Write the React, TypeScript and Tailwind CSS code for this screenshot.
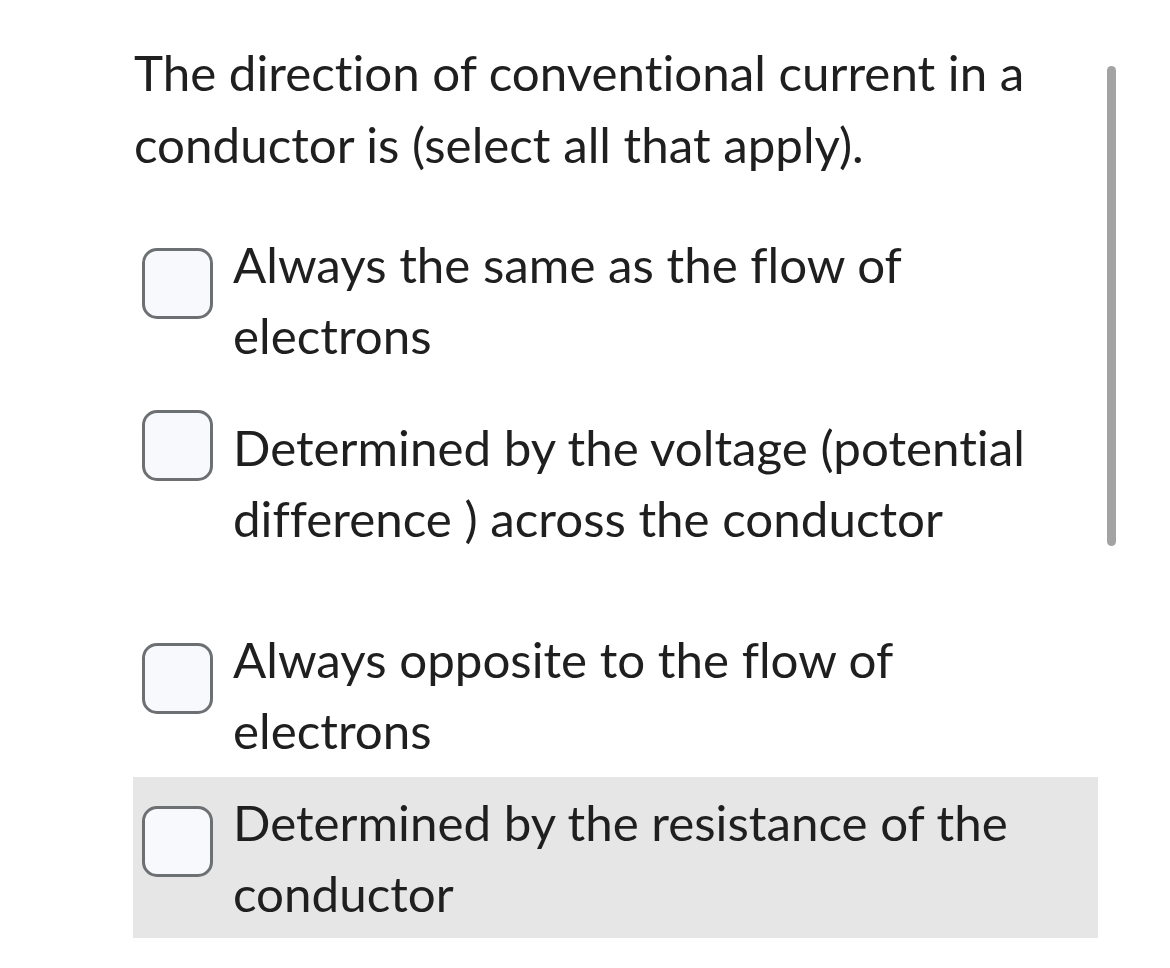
import React from 'react';

interface Choice {
  label: string;
  textTop: string;
  rowGap: string;
  hovered?: boolean;
}

const choices: Choice[] = [
  { label: 'Always the same as the flow of electrons', textTop: 'pt-0', rowGap: 'mt-[39px]' },
  { label: 'Determined by the voltage (potential difference ) across the conductor', textTop: 'pt-[21px]', rowGap: 'mt-px' },
  { label: 'Always opposite to the flow of electrons', textTop: 'pt-0', rowGap: 'mt-[51px]' },
  { label: 'Determined by the resistance of the conductor', textTop: 'pt-0', rowGap: 'mt-[2px]', hovered: true },
];

const App: React.FC = () => {
  return (
    <div className="relative w-[1170px] h-[968px] bg-white overflow-hidden font-['Lato',sans-serif] text-[#1f1f1f] [font-variant-ligatures:none]">
      <div className="w-[965px] ml-[133px] pt-[36px]">
        {/* Question */}
        <p className="text-[49.3px] leading-[72px] pl-[1px] pr-[40px]">
          The direction of conventional current in a conductor is (select all that apply).
        </p>

        {/* Choices */}
        {choices.map((c, idx) => (
          <label
            key={idx}
            className={`flex items-start gap-[20px] pl-[9px] pr-[10px] pt-[10px] pb-[9px] ${c.rowGap} ${
              c.hovered ? 'bg-[#e6e6e6]' : ''
            }`}
          >
            <span className="shrink-0 w-[71px] h-[71px] mt-[19px] rounded-[15px] border-[3px] border-[#6d7073] bg-[#f8f9fc]" />
            <span className={`text-[49.3px] leading-[71px] ${c.textTop}`}>{c.label}</span>
          </label>
        ))}
      </div>

      {/* Scrollbar */}
      <div className="absolute left-[1107px] top-[66px] w-[9px] h-[480px] rounded-full bg-[#a3a3a3]" />
    </div>
  );
};

export default App;
